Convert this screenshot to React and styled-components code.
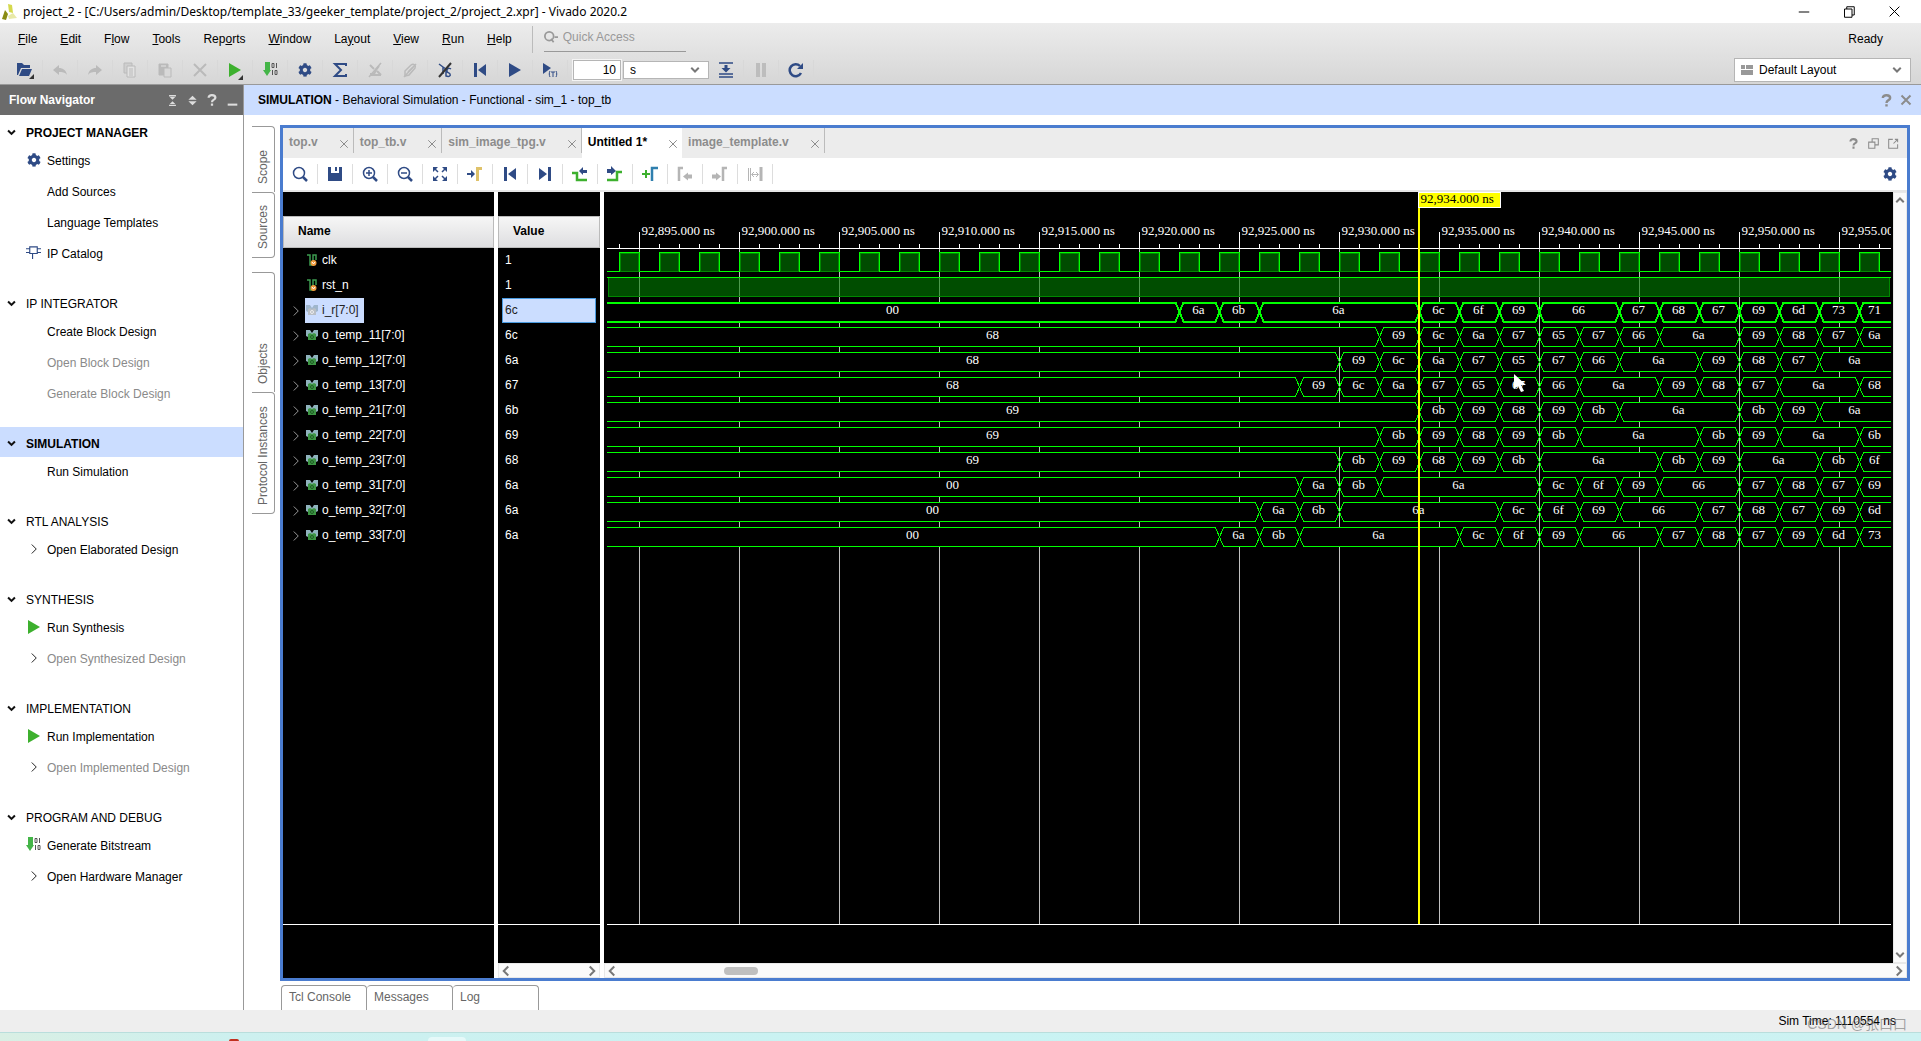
import React from 'react';
import styled, {createGlobalStyle} from 'styled-components';
import {FaCog} from 'react-icons/fa';

const NAVY = '#2f4b85';
const GREEN = '#3db02e';
const WAVE = '#00ff00';
const SELECT_BLUE = '#cbddff';

const GlobalStyle = createGlobalStyle`
  * {
    box-sizing: border-box;
  }
  body {
    margin: 0;
    background: white;
    color: black;
    font-family: 'Liberation Sans', Arial, sans-serif;
    font-size: 12px;
    line-height: 16px;
  }
  button, input, select {
    font: inherit;
    color: inherit;
    margin: 0;
    padding: 0;
    border: 0;
    background: none;
  }
  svg {
    display: block;
    flex-shrink: 0;
  }
`;

/* ---------- layout ---------- */

const Page = styled.div`
  display: flex;
  flex-direction: column;
  min-height: 100vh;
`;

const TitleBar = styled.header`
  display: flex;
  align-items: center;
  height: 23px;
  padding: 0 19px 0 1px;
  gap: 6px;
  font-family: 'Noto Sans', 'Open Sans', sans-serif;
  & h1 {
    flex: 1;
    margin: 0;
    font-size: 12px;
    font-weight: normal;
  }
`;

const WindowButtons = styled.div`
  display: flex;
  gap: 29px;
`;

const TopBar = styled.div`
  background: linear-gradient(#ececec, #d6d6d6);
  border-bottom: 1px solid #999;
`;

const MenuBar = styled.nav`
  display: flex;
  align-items: center;
  gap: 23px;
  height: 31px;
  padding: 0 38px 0 18px;
`;

const Ready = styled.span`
  margin-left: auto;
`;

const QuickAccess = styled.label`
  display: flex;
  align-items: center;
  align-self: flex-start;
  width: 154px;
  height: 27px;
  margin: 3px 0 0 -3px;
  padding-left: 11px;
  border-left: 1px solid #bbb;
  color: #8f8f8f;
  & input {
    width: 120px;
    height: 20px;
    &::placeholder {
      color: #999;
      opacity: 1;
    }
  }
  & span {
    display: flex;
    align-items: center;
    width: 142px;
    height: 24px;
    padding-bottom: 4px;
    gap: 5px;
    border-bottom: 1px solid #999;
  }
`;

const ToolBar = styled.div`
  display: flex;
  align-items: center;
  height: 30px;
  padding: 1px 10px 0 8px;
`;

const ToolButton = styled.button`
  display: flex;
  align-items: center;
  justify-content: center;
  width: 35px;
  height: 20px;
  border-right: 1px solid ${({$divider}) => $divider || '#d8d8d8'};
`;

const PlainButton = styled.button`
  display: flex;
  align-items: center;
  justify-content: center;
  width: ${({$size}) => $size || 12}px;
  height: ${({$size}) => $size || 12}px;
  color: #8c8c8c;
`;

const TimeInput = styled.input`
  width: 48px;
  height: 20px;
  margin: 0 2px 0 5px;
  padding-right: 4px;
  border: 1px solid #b5b5b5;
  outline: 1px solid #f4f4f4;
  background: white;
  text-align: right;
`;

const SelectBox = styled.div`
  display: flex;
  align-items: center;
  width: ${({$width}) => $width}px;
  height: ${({$tall}) => ($tall ? 24 : 18)}px;
  padding: 0 7px 0 6px;
  gap: 6px;
  border: 1px solid #b5b5b5;
  background: white;
  & select {
    flex: 1;
    min-width: 0;
    appearance: none;
  }
`;

const Spacer = styled.div`
  flex: 1;
`;

const Body = styled.div`
  display: flex;
  flex: 1;
`;

const SideBar = styled.aside`
  display: flex;
  flex-direction: column;
  width: 244px;
  border-right: 1px solid #999;
`;

const SideHeader = styled.div`
  display: flex;
  align-items: center;
  height: 30px;
  padding: 0 5px 0 9px;
  gap: 8px;
  margin-bottom: 1px;
  background: #6b6b6b;
  color: white;
  & h2 {
    flex: 1;
    margin: 0;
    font-size: 12px;
  }
`;

const NavSection = styled.section`
  padding-bottom: 17px;
`;

const NavHeading = styled.button`
  display: flex;
  align-items: center;
  width: 100%;
  height: 30px;
  padding: 3px 0 0 6px;
  gap: 9px;
  text-align: left;
  font-weight: ${({$bold}) => ($bold ? 'bold' : 'normal')};
  background: ${({$selected}) => ($selected ? SELECT_BLUE : 'none')};
`;

const NavItem = styled.button`
  display: flex;
  align-items: center;
  width: 100%;
  height: 31px;
  padding: 0 0 2px 26px;
  gap: 6px;
  text-align: left;
  color: ${({disabled}) => (disabled ? '#8a8a8a' : 'black')};
`;

const IconSlot = styled.span`
  display: flex;
  align-items: center;
  justify-content: center;
  width: 15px;
  height: 20px;
  padding-bottom: 2px;
`;

const Main = styled.main`
  display: flex;
  flex: 1;
  flex-direction: column;
  min-width: 0;
`;

const MainHeader = styled.div`
  display: flex;
  align-items: center;
  height: 30px;
  padding: 0 9px 0 14px;
  gap: 8px;
  background: ${SELECT_BLUE};
  & h2 {
    flex: 1;
    margin: 0;
    font-size: 12px;
    font-weight: normal;
  }
`;

const Workspace = styled.div`
  display: flex;
  flex: 1;
  padding: 10px 11px 0 8px;
  gap: 5px;
`;

const VerticalTabs = styled.div`
  display: flex;
  flex-direction: column;
  width: 23px;
  padding-top: 1px;
`;

/* rotated by half a turn, so the borders are given upside down */
const VerticalTab = styled.button`
  display: flex;
  align-items: center;
  height: ${({$height}) => $height}px;
  margin-top: ${({$gap}) => $gap || 0}px;
  padding-top: 8px;
  border: solid #999;
  border-width: ${({$last}) => ($last ? 1 : 0)}px 0 1px 1px;
  border-radius: ${({$last}) => ($last ? 4 : 0)}px 0 0 4px;
  writing-mode: vertical-rl;
  transform: rotate(180deg);
  color: #666;
`;

const Panel = styled.section`
  display: flex;
  flex: 1;
  flex-direction: column;
  min-width: 0;
  border: 3px solid #4a7ccf;
`;

const FileTabs = styled.div`
  display: flex;
  height: 30px;
  padding-right: 8px;
  background: #ececec;
`;

const FileTab = styled.div`
  display: flex;
  align-items: flex-start;
  height: ${({$active}) => ($active ? 30 : 25)}px;
  padding: 6px 3px 0 6px;
  gap: 20px;
  border-right: ${({$active}) => ($active ? 0 : 1)}px solid #bbb;
  background: ${({$active}) => ($active ? 'white' : 'none')};
  color: ${({$active}) => ($active ? 'black' : '#8c8c8c')};
  & > button:first-child {
    font-weight: bold;
  }
  & > button:last-child {
    margin-top: 4px;
  }
`;

const TabActions = styled.div`
  display: flex;
  align-items: center;
  gap: 8px;
  margin-left: auto;
`;

const WaveTools = styled.div`
  display: flex;
  align-items: center;
  height: 34px;
  padding-right: 9px;
  border-bottom: 2px solid #e6e6e6;
`;

const Viewer = styled.div`
  display: flex;
  flex: 1;
  gap: 4px;
`;

const Column = styled.div`
  display: flex;
  flex-direction: column;
  width: ${({$width}) => $width}px;
`;

const ColumnBody = styled.div`
  flex: 1;
  padding-top: 24px;
  background: black;
`;

const ColumnFoot = styled.div`
  height: ${({$height}) => $height}px;
  border-top: 1px solid white;
  background: black;
`;

const SignalTable = styled.table`
  width: 100%;
  border-collapse: separate;
  border-spacing: 0;
  color: white;
  & th {
    height: 32px;
    padding: 0 14px 2px;
    border: 1px solid #bbb;
    background: linear-gradient(#f6f6f6, #dedee0);
    color: black;
    text-align: left;
  }
  & td {
    height: 25px;
    padding: 0;
  }
`;

const NameCell = styled.div`
  display: flex;
  align-items: center;
  height: 25px;
  padding-left: 7px;
  gap: 3px;
`;

const NameLabel = styled.span`
  display: flex;
  align-items: center;
  height: 25px;
  padding: 0 5px 1px 1px;
  gap: 4px;
  background: ${({$selected}) => ($selected ? SELECT_BLUE : 'none')};
  color: ${({$selected}) => ($selected ? '#222' : 'white')};
`;

const ArrowSlot = styled.span`
  width: 12px;
`;

const ValueCell = styled.div`
  display: flex;
  align-items: center;
  height: 25px;
  margin: 0 4px;
  padding: 0 0 1px 2px;
  border: 1px solid ${({$selected}) => ($selected ? '#4a9be0' : 'black')};
  background: ${({$selected}) => ($selected ? SELECT_BLUE : 'black')};
  color: ${({$selected}) => ($selected ? '#222' : 'white')};
`;

const WaveColumn = styled.div`
  display: grid;
  flex: 1;
  grid-template-columns: 1fr 14px;
  grid-template-rows: 1fr 15px;
  min-width: 0;
`;

const WaveArea = styled.div`
  display: flex;
  flex-direction: column;
  min-width: 0;
  padding: 0 2px 0 3px;
  background: black;
`;

const WaveCanvas = styled.div`
  flex: 1;
  min-height: 400px;
  & svg {
    width: 100%;
    height: 100%;
  }
  & text {
    font-family: 'Liberation Serif', 'Times New Roman', serif;
    font-size: 13px;
    fill: white;
  }
`;

const CursorText = styled.text`
  && {
    fill: black;
  }
`;

const ScrollBar = styled.div`
  display: flex;
  align-items: center;
  justify-content: space-between;
  flex-direction: ${({$vertical}) => ($vertical ? 'column' : 'row')};
  padding: ${({$vertical}) => ($vertical ? '1px 0' : '1px 1px 0')};
  height: ${({$vertical}) => ($vertical ? 'auto' : '15px')};
  grid-column: ${({$vertical}) => ($vertical ? 'auto' : '1 / -1')};
  background: #fafafa;
  border: 1px solid #e8e8e8;
`;

const Thumb = styled.div`
  width: 34px;
  height: 8px;
  margin: 0 auto 0 106px;
  border-radius: 4px;
  background: #bfbfbf;
`;

const BottomTabs = styled.div`
  display: flex;
  height: 29px;
  padding: 4px 0 0 37px;
`;

const BottomTab = styled.button`
  width: 86px;
  height: 25px;
  padding: 0 0 2px 7px;
  border: solid #999;
  border-width: 1px 1px 0 ${({$first}) => ($first ? 1 : 0)}px;
  border-radius: 4px 4px 0 0;
  text-align: left;
  color: #666;
`;

const StatusBar = styled.footer`
  display: flex;
  align-items: center;
  justify-content: flex-end;
  position: relative;
  height: 22px;
  padding-right: 25px;
  background: #eee;
`;

const Watermark = styled.span`
  position: absolute;
  right: 14px;
  bottom: -2px;
  color: rgba(110, 110, 110, 0.6);
  font-family: 'Liberation Sans', 'Noto Sans CJK SC', sans-serif;
  font-size: 14px;
  line-height: 20px;
`;

const TaskBar = styled.div`
  display: flex;
  align-items: flex-end;
  height: 9px;
  border-top: 1px solid #b9dedc;
  background: linear-gradient(90deg, #d9efe4, #cdf0ef 12%, #c9f3f3 50%, #cdf2f2);
`;

const TaskIcon = styled.span`
  width: 10px;
  height: 2px;
  margin-left: 229px;
  border-radius: 5px 5px 0 0;
  background: #c23020;
`;

const TaskActive = styled.span`
  width: 38px;
  height: 4px;
  margin-left: 189px;
  border-radius: 4px 4px 0 0;
  background: #e6f9f9;
`;

/* ---------- icons ---------- */

const Icon = ({size = 16, color = NAVY, fill = 'none', width = 2, children}) => (
  <svg width={size} height={size} viewBox="0 0 16 16" fill={fill} stroke={color} strokeWidth={width} aria-hidden="true">
    {children}
  </svg>
);

const Chevron = ({dir = 'down', size = 12, color = '#777', width = 2}) => {
  const paths = {down: 'M3 5l5 5 5-5', up: 'M3 11l5-5 5 5', right: 'M5 2l6 6-6 6', left: 'M11 2L5 8l6 6'};
  return (
    <Icon size={size} color={color} width={(width * 16) / size}>
      <path d={paths[dir]} />
    </Icon>
  );
};

const Logo = () => (
  <svg width="16" height="18" viewBox="0 0 16 18" aria-hidden="true">
    <path d="M7 1l4 1 1 8-4-1z" fill="#d5d94e" />
    <path d="M4 7l3 4-2 6-4-1z" fill="#8a8c12" />
    <path d="M7 13l5-3 4 5-8 1z" fill="#e8e9a8" />
  </svg>
);

const Folder = () => (
  <svg width="19" height="20" viewBox="0 0 19 20" aria-hidden="true">
    <path d="M1 3h5l2 2h6v3H5l-3 7H1z" fill={NAVY} />
    <path d="M6 9h10l-3 7H3z" fill={NAVY} />
    <path d="M18 14v5h-5z" fill="#333" />
  </svg>
);

const Undo = ({flip}) => (
  <Icon fill="#bababa" color="none">
    <path d={flip ? 'M15 8L9 3v3C5 6 2 8 1 13c2-3 5-3 8-3v3z' : 'M1 8l6-5v3c4 0 7 2 8 7-2-3-5-3-8-3v3z'} />
  </Icon>
);

const Copy = () => (
  <Icon color="#bababa" width={1}>
    <path d="M2 1h8v10H2z" fill="#cfcfcf" />
    <path d="M5 4h8v11H5z" fill="#e2e2e2" />
    <path d="M7 7h4M7 9h4M7 11h4M7 13h4" />
  </Icon>
);

const Paste = () => (
  <Icon color="#bababa" width={1}>
    <path d="M2 2h9v11H2z" fill="#bababa" />
    <path d="M4 4h5" stroke="#e4e4e4" />
    <path d="M7 6h7v9H7z" fill="#d8d8d8" />
  </Icon>
);

const Cross = ({size = 16, color = '#bababa', width = 2}) => (
  <Icon size={size} color={color} width={(width * 16) / size}>
    <path d="M2 2l12 12M14 2L2 14" />
  </Icon>
);

const Play = ({color = GREEN, menu}) => (
  <svg width="16" height="20" viewBox="0 0 16 20" aria-hidden="true">
    <path d="M2 3l12 7-12 7z" fill={color} />
    {menu && <path d="M16 15v5h-5z" fill="#333" />}
  </svg>
);

const Bitstream = () => (
  <svg width="15" height="15" viewBox="0 0 15 15" aria-hidden="true">
    <path d="M2 0h5v8h1l-4 6-4-6h2z" fill="#44b548" />
    <path d="M9 1.5h2v4H9zM13.500 1v5M9.500 8v5M12 8.500h2v4h-2z" fill="none" stroke="#555" />
  </svg>
);

const Sigma = () => (
  <Icon width={2}>
    <path d="M14 4V2H3l6 6-6 6h11v-2" />
  </Icon>
);

const BreakpointOff = () => (
  <Icon color="#bababa" width={2}>
    <path d="M3 3l4 4M3 12h4l2-4 3-4M3 13h11M10 9l4 4" />
    <path d="M2 15L14 1" strokeWidth="1.500" />
  </Icon>
);

const Marker = () => (
  <Icon color="#bababa" width={1.500}>
    <path d="M3 9l6-6c3-2 5 1 4 3l-6 7-4 1zM6 10l5-5" />
    <path d="M2 15L14 2" />
  </Icon>
);

const ProbesOff = () => (
  <Icon width={1.500}>
    <path d="M2 2l4 3v7M6 5l3 2M9 7v7c3 1 5 0 4-2s-4-1-3-4 4-1 4-1" />
    <path d="M2 15L14 1" stroke="#333" strokeWidth="2" />
  </Icon>
);

const SkipIcon = ({end}) => (
  <Icon fill={NAVY} color="none">
    {end ? <path d="M2 2l8 6-8 6zM11 1h3v14h-3z" /> : <path d="M14 2L6 8l8 6zM2 1h3v14H2z" />}
  </Icon>
);

const PlayTimed = () => (
  <Icon fill={NAVY} color="none">
    <path d="M1 1l8 5-8 6z" />
    <path d="M8 9c-1 2-1 4 0 6M14 9c1 2 1 4 0 6M9 10h4M11 10v5" fill="none" stroke={NAVY} strokeWidth="1" />
  </Icon>
);

const StepDown = () => (
  <Icon width={1.500}>
    <path d="M1 1h14M1 12h14M1 15h14" />
    <path d="M6.500 3h3v3h3L8 10.500 3.500 6h3z" fill={NAVY} stroke="none" />
  </Icon>
);

const Pause = () => (
  <Icon fill="#bdbdbd" color="none">
    <path d="M3 1h4v14H3zM9 1h4v14H9z" />
  </Icon>
);

const Restart = () => (
  <Icon width={2.500}>
    <path d="M13 11a6 6 0 1 1-1-7" />
    <path d="M15 1v6H9z" fill={NAVY} stroke="none" />
  </Icon>
);

const LayoutIcon = () => (
  <svg width="12" height="12" viewBox="0 0 12 12" fill="#999" aria-hidden="true">
    <path d="M0 1h4v4H0zM5 1h7v4H5zM0 6h12v5H0z" />
  </svg>
);

const Question = ({size = 13, color = '#8c8c8c'}) => (
  <Icon size={size} color={color} width={3}>
    <path d="M3.500 5c0-5 9-4 9 0 0 3-4.500 2-4.500 6M8 12.500v3" />
  </Icon>
);

const Lens = ({sign}) => (
  <Icon width={1.500}>
    <circle cx="7" cy="7" r="5.500" />
    <path d="M11 11l4 4" strokeWidth="2.500" />
    {sign && <path d={sign === '+' ? 'M4 7h6M7 4v6' : 'M4 7h6'} />}
  </Icon>
);

const Save = () => (
  <Icon fill={NAVY} color="none">
    <path d="M1 1h3v6h8V1h3v14H1zM8 1h2v4H8z" />
  </Icon>
);

const Fit = () => (
  <Icon width={1.500} fill={NAVY}>
    <path d="M2 2l4 4M14 2l-4 4M14 14l-4-4M2 14l4-4" />
    <path d="M1 1h5L1 6zM15 1v5l-5-5zM15 15h-5l5-5zM1 15v-5l5 5z" stroke="none" />
  </Icon>
);

const EdgeIcon = ({kind}) => {
  if (kind === 'cursor') {
    return (
      <Icon width={3} color="#dfc26a">
        <path d="M0 7h4V4l4 4-4 4V9H0z" fill={NAVY} stroke="none" />
        <path d="M10.500 15V2.500H15" />
      </Icon>
    );
  }
  if (kind === 'prev' || kind === 'next') {
    return (
      <Icon width={2.500} color={GREEN}>
        <path d={kind === 'prev' ? 'M0 7h5v7h10' : 'M0 14h10V6h5'} />
        <path d={kind === 'prev' ? 'M15 4h-4V1L7 5l4 4V7h4z' : 'M0 3h4V0l5 5-5 4V7H0z'} fill={NAVY} stroke="none" />
      </Icon>
    );
  }
  if (kind === 'add') {
    return (
      <Icon width={2} color={GREEN}>
        <path d="M0 8h8M4 4v8" />
        <path d="M10 15V2h6" stroke="#2f7fae" strokeWidth="2.500" />
      </Icon>
    );
  }
  if (kind === 'span') {
    return (
      <Icon width={1} color="#b5b5b5">
        <path d="M1.500 2v13M3.500 2v13M5 8.500h6M7 6L4.500 8.500 7 11M9 6l2.500 2.500L9 11" />
        <path d="M14 1v14" strokeWidth="3" />
      </Icon>
    );
  }
  return (
    <Icon width={2.500} color="#b5b5b5">
      <path d={kind === 'markPrev' ? 'M2 15V2h4' : 'M11 15V2h4'} />
      <path
        d={kind === 'markPrev' ? 'M15 8.500h-4v-2L6 10.500l5 4v-2h4z' : 'M0 8.500h4v-2l5 4-5 4v-2H0z'}
        fill="#b5b5b5"
        stroke="none"
      />
    </Icon>
  );
};

const Chip = () => (
  <Icon size={15} width={1.200}>
    <path d="M4 2h8v7H4zM0 4h4M0 8h4M12 4h4M12 8h4M7 9v6" />
  </Icon>
);

const SignalIcon = ({kind}) => {
  if (kind === 'bit') {
    return (
      <svg width="12" height="12" viewBox="0 0 12 12" aria-hidden="true">
        <path d="M1 1h3v10h3V1h3v5" fill="none" stroke="#3d9c50" strokeWidth="1.500" />
        <circle cx="7.500" cy="9" r="3" fill="#f09a3c" />
        <path d="M6 8l1.500 2L9 8" fill="none" stroke="#fff" />
      </svg>
    );
  }
  const selected = kind === 'selected';
  return (
    <svg width="12" height="12" viewBox="0 0 12 12" aria-hidden="true">
      <path d="M0 1h4l2 3 2-3h4v6l-2 1H2L0 7z" fill={selected ? '#9fb6cc' : '#8fb3bd'} />
      <path d="M2 5l2-1 2 1 2-1 2 1v6H2z" fill={selected ? '#b9bfc6' : '#3d9644'} />
      <circle cx="6" cy="8" r="1.500" fill="none" stroke={selected ? '#eee' : '#1f5c26'} />
    </svg>
  );
};

const Gear = ({size = 14}) => <FaCog size={size} color={NAVY} aria-hidden="true" />;

/* ---------- data ---------- */

// [label, index of the mnemonic letter]
const menus = [
  ['File', 0],
  ['Edit', 0],
  ['Flow', 1],
  ['Tools', 0],
  ['Reports', 3],
  ['Window', 0],
  ['Layout', 2],
  ['View', 0],
  ['Run', 0],
  ['Help', 0],
];

const mainTools = [
  ['Open', <Folder />],
  ['Undo', <Undo />],
  ['Redo', <Undo flip />],
  ['Copy', <Copy />],
  ['Paste', <Paste />],
  ['Delete', <Cross />],
  ['Run', <Play menu />],
  ['Generate Bitstream', <Bitstream />],
  ['Settings', <Gear />],
  ['Report', <Sigma />],
  ['Toggle breakpoint', <BreakpointOff />],
  ['Edit marks', <Marker />],
  ['Clear probes', <ProbesOff />],
  ['Restart simulation', <SkipIcon />],
  ['Run all', <Play color={NAVY} />],
  ['Run for time', <PlayTimed />],
];

const waveTools = [
  ['Find', <Lens />],
  ['Save', <Save />],
  ['Zoom in', <Lens sign="+" />],
  ['Zoom out', <Lens sign="-" />],
  ['Zoom fit', <Fit />],
  ['Go to cursor', <EdgeIcon kind="cursor" />],
  ['Go to start', <SkipIcon />],
  ['Go to end', <SkipIcon end />],
  ['Previous transition', <EdgeIcon kind="prev" />],
  ['Next transition', <EdgeIcon kind="next" />],
  ['Add marker', <EdgeIcon kind="add" />],
  ['Previous marker', <EdgeIcon kind="markPrev" />],
  ['Next marker', <EdgeIcon kind="markNext" />],
  ['Swap cursors', <EdgeIcon kind="span" />],
];

const arrow = <Chevron dir="right" color="#222" width={1} />;

const sections = [
  {
    title: 'PROJECT MANAGER',
    bold: true,
    items: [
      {label: 'Settings', icon: <Gear />},
      {label: 'Add Sources'},
      {label: 'Language Templates'},
      {label: 'IP Catalog', icon: <Chip />},
    ],
  },
  {
    title: 'IP INTEGRATOR',
    items: [
      {label: 'Create Block Design'},
      {label: 'Open Block Design', disabled: true},
      {label: 'Generate Block Design', disabled: true},
    ],
  },
  {title: 'SIMULATION', bold: true, selected: true, items: [{label: 'Run Simulation'}]},
  {title: 'RTL ANALYSIS', items: [{label: 'Open Elaborated Design', icon: arrow}]},
  {
    title: 'SYNTHESIS',
    items: [
      {label: 'Run Synthesis', icon: <Play />},
      {label: 'Open Synthesized Design', icon: arrow, disabled: true},
    ],
  },
  {
    title: 'IMPLEMENTATION',
    items: [
      {label: 'Run Implementation', icon: <Play />},
      {label: 'Open Implemented Design', icon: arrow, disabled: true},
    ],
  },
  {
    title: 'PROGRAM AND DEBUG',
    items: [
      {label: 'Generate Bitstream', icon: <Bitstream />},
      {label: 'Open Hardware Manager', icon: arrow},
    ],
  },
];

const files = ['top.v', 'top_tb.v', 'sim_image_tpg.v', 'Untitled 1*', 'image_template.v'];

// bus values as "value@end", times in ns after 92,900
const signals = [
  {name: 'clk', value: '1', kind: 'bit'},
  {name: 'rst_n', value: '1', kind: 'bit'},
  {
    name: 'i_r[7:0]',
    value: '6c',
    kind: 'selected',
    bus: '00@22 6a@24 6b@26 6a@34 6c@36 6f@38 69@40 66@44 67@46 68@48 67@50 69@52 6d@54 73@56 71',
  },
  {
    name: 'o_temp_11[7:0]',
    value: '6c',
    bus: '68@32 69@34 6c@36 6a@38 67@40 65@42 67@44 66@46 6a@50 69@52 68@54 67@56 6a',
  },
  {
    name: 'o_temp_12[7:0]',
    value: '6a',
    bus: '68@30 69@32 6c@34 6a@36 67@38 65@40 67@42 66@44 6a@48 69@50 68@52 67@54 6a',
  },
  {
    name: 'o_temp_13[7:0]',
    value: '67',
    bus: '68@28 69@30 6c@32 6a@34 67@36 65@38 67@40 66@42 6a@46 69@48 68@50 67@52 6a@56 68',
  },
  {name: 'o_temp_21[7:0]', value: '6b', bus: '69@34 6b@36 69@38 68@40 69@42 6b@44 6a@50 6b@52 69@54 6a'},
  {name: 'o_temp_22[7:0]', value: '69', bus: '69@32 6b@34 69@36 68@38 69@40 6b@42 6a@48 6b@50 69@52 6a@56 6b'},
  {name: 'o_temp_23[7:0]', value: '68', bus: '69@30 6b@32 69@34 68@36 69@38 6b@40 6a@46 6b@48 69@50 6a@54 6b@56 6f'},
  {name: 'o_temp_31[7:0]', value: '6a', bus: '00@28 6a@30 6b@32 6a@40 6c@42 6f@44 69@46 66@50 67@52 68@54 67@56 69'},
  {
    name: 'o_temp_32[7:0]',
    value: '6a',
    bus: '00@26 6a@28 6b@30 6a@38 6c@40 6f@42 69@44 66@48 67@50 68@52 67@54 69@56 6d',
  },
  {
    name: 'o_temp_33[7:0]',
    value: '6a',
    bus: '00@24 6a@26 6b@28 6a@36 6c@38 6f@40 69@42 66@46 67@48 68@50 67@52 69@54 6d@56 73',
  },
];

/* ---------- waveform ---------- */

const NS = 20;
const FIRST = -6.6;
const LAST = 57.6;
const AXIS_Y = 56;
const timeX = (t) => Math.round((t + 5) * NS + 32) + 0.5;
const rowTop = (row) => AXIS_Y + 4 + row * 25 + 0.5;

const BusWave = ({row, bus, thick}) => {
  const top = rowTop(row);
  const mid = top + 9.5;
  const bottom = top + 19;
  let start = FIRST;
  return bus.split(' ').map((part) => {
    const [label, endText] = part.split('@');
    const end = endText ? Number(endText) : LAST;
    const open = start === FIRST;
    const x0 = open ? -20 : timeX(start);
    const x1 = endText ? timeX(end) : timeX(80);
    const labelX = (timeX(start) + timeX(end)) / 2 - 1;
    const points = `${x0},${mid} ${x0 + 4},${top} ${x1 - 4},${top} ${x1},${mid} ${x1 - 4},${bottom} ${x0 + 4},${bottom}`;
    start = end;
    return (
      <g key={x0}>
        <polygon points={points} fill="black" stroke={WAVE} strokeWidth={thick ? 2 : 1} />
        <text x={labelX} y={top + 11} textAnchor="middle">
          {label}
        </text>
      </g>
    );
  });
};

const ClockWave = ({row}) => {
  const top = rowTop(row);
  const bottom = top + 19;
  const pulses = [];
  for (let t = -6; t < LAST; t += 2) {
    pulses.push(t);
  }
  const line = pulses.map((t) => `H${timeX(t)}V${top}H${timeX(t + 1)}V${bottom}`).join('');
  return (
    <g>
      {pulses.map((t) => (
        <rect key={t} x={timeX(t) + 1} y={top + 1} width={NS - 2} height="18" fill="#004c00" stroke="#008800" />
      ))}
      <path d={`M0 ${bottom}${line}H3000`} fill="none" stroke={WAVE} />
    </g>
  );
};

const Waveform = () => {
  const ticks = [];
  for (let t = -6; t <= 57; t += 1) {
    ticks.push(t);
  }
  const majors = ticks.filter((t) => t % 5 === 0);
  const cursorX = timeX(34) - 1;
  return (
    <svg role="img" aria-label="Waveforms">
      <g shapeRendering="crispEdges">
        {majors.map((t) => (
          <line key={t} x1={timeX(t)} x2={timeX(t)} y1={AXIS_Y} y2="100%" stroke="#c0c0c0" />
        ))}
        {ticks.map((t) => (
          <line key={t} x1={timeX(t)} x2={timeX(t)} y1={t % 5 === 0 ? 40 : 52} y2={AXIS_Y} stroke="white" />
        ))}
        <line x1="0" x2="100%" y1={AXIS_Y + 0.5} y2={AXIS_Y + 0.5} stroke="white" />
        <ClockWave row={0} />
        <rect x="1" y={rowTop(1)} width="99.8%" height="19" fill="#008000" fillOpacity="0.6" stroke="#008800" />
        <line x1="0" x2="100%" y1={rowTop(1)} y2={rowTop(1)} stroke={WAVE} />
        {signals.map(
          (signal, row) =>
            signal.bus && (
              <BusWave key={signal.name} row={row} bus={signal.bus} thick={signal.kind === 'selected'} />
            ),
        )}
        <line x1={cursorX + 0.5} x2={cursorX + 0.5} y1="0" y2="100%" stroke="#ffff00" strokeWidth="2" />
        <rect x={cursorX} y="0" width="82" height="15" fill="#ffff00" stroke="white" />
      </g>
      {majors.map((t) => (
        <text key={t} x={timeX(t) + 2} y="43">
          {`92,${900 + t}.000 ns`}
        </text>
      ))}
      <CursorText x={cursorX + 2} y="11">
        92,934.000 ns
      </CursorText>
      <path d="M907 182v15l4-3 3 6 3-1-3-6h5z" fill="white" />
    </svg>
  );
};

/* ---------- page parts ---------- */

const MenuItem = ({label, index}) => (
  <button type="button">
    {label.slice(0, index)}
    <u>{label[index]}</u>
    {label.slice(index + 1)}
  </button>
);

const Header = () => (
  <>
    <TitleBar>
      <Logo />
      <h1>project_2 - [C:/Users/admin/Desktop/template_33/geeker_template/project_2/project_2.xpr] - Vivado 2020.2</h1>
      <WindowButtons>
        <PlainButton type="button" aria-label="Minimize" $size={16}>
          <Icon color="black" size={12} width={1.300}>
            <path d="M1 8h14" />
          </Icon>
        </PlainButton>
        <PlainButton type="button" aria-label="Restore" $size={16}>
          <Icon color="black" size={12} width={1.300}>
            <path d="M2 4h10v11H2zM5 4V1h10v11h-3" />
          </Icon>
        </PlainButton>
        <PlainButton type="button" aria-label="Close window" $size={16}>
          <Cross color="black" size={13} width={1} />
        </PlainButton>
      </WindowButtons>
    </TitleBar>
    <TopBar>
      <MenuBar>
        {menus.map(([label, index]) => (
          <MenuItem key={label} label={label} index={index} />
        ))}
        <QuickAccess>
          <span>
            <Icon size={14} color="#999" width={2}>
              <circle cx="6" cy="7" r="5" />
              <path d="M8 10l3 4M12 8h4" />
            </Icon>
            <input placeholder="Quick Access" aria-label="Quick Access" />
          </span>
        </QuickAccess>
        <Ready>Ready</Ready>
      </MenuBar>
      <ToolBar>
        {mainTools.map(([label, icon]) => (
          <ToolButton key={label} type="button" aria-label={label}>
            {icon}
          </ToolButton>
        ))}
        <TimeInput defaultValue="10" aria-label="Run time" />
        <SelectBox $width={86}>
          <select aria-label="Time unit">
            <option>s</option>
          </select>
          <Chevron />
        </SelectBox>
        <ToolButton type="button" aria-label="Step">
          <StepDown />
        </ToolButton>
        <ToolButton type="button" aria-label="Break">
          <Pause />
        </ToolButton>
        <ToolButton type="button" aria-label="Relaunch">
          <Restart />
        </ToolButton>
        <Spacer />
        <SelectBox $width={177} $tall>
          <LayoutIcon />
          <select aria-label="Layout">
            <option>Default Layout</option>
          </select>
          <Chevron />
        </SelectBox>
      </ToolBar>
    </TopBar>
  </>
);

const FlowNavigator = () => (
  <SideBar>
    <SideHeader>
      <h2>Flow Navigator</h2>
      <PlainButton type="button" aria-label="Collapse all">
        <Icon size={11} color="#ddd">
          <path d="M3 1h10M3 15h10" />
          <path d="M4 3h8L8 7zM4 13h8L8 9z" fill="#ddd" stroke="none" />
        </Icon>
      </PlainButton>
      <PlainButton type="button" aria-label="Expand all">
        <Icon size={11} color="none" fill="#ddd">
          <path d="M2 7h12L8 1zM2 9h12l-6 6z" />
        </Icon>
      </PlainButton>
      <PlainButton type="button" aria-label="Help on flow">
        <Question size={12} color="#ddd" />
      </PlainButton>
      <PlainButton type="button" aria-label="Hide">
        <Icon size={11} color="#ddd" width={3}>
          <path d="M1 14h14" />
        </Icon>
      </PlainButton>
    </SideHeader>
    {sections.map((section) => (
      <NavSection key={section.title}>
        <NavHeading type="button" $bold={section.bold} $selected={section.selected}>
          <Chevron size={11} color="#111" />
          {section.title}
        </NavHeading>
        {section.items.map((item) => (
          <NavItem key={item.label} type="button" disabled={item.disabled}>
            <IconSlot>{item.icon}</IconSlot>
            {item.label}
          </NavItem>
        ))}
      </NavSection>
    ))}
  </SideBar>
);

const NameColumn = () => (
  <Column $width={211}>
    <ColumnBody>
      <SignalTable>
        <thead>
          <tr>
            <th>Name</th>
          </tr>
        </thead>
        <tbody>
          {signals.map(({name, kind}) => (
            <tr key={name}>
              <td>
                <NameCell>
                  <ArrowSlot>{kind !== 'bit' && <Chevron dir="right" color="#999" width={1} />}</ArrowSlot>
                  <NameLabel $selected={kind === 'selected'}>
                    <SignalIcon kind={kind} />
                    {name}
                  </NameLabel>
                </NameCell>
              </td>
            </tr>
          ))}
        </tbody>
      </SignalTable>
    </ColumnBody>
    <ColumnFoot $height={54} />
  </Column>
);

const ValueColumn = () => (
  <Column $width={102}>
    <ColumnBody>
      <SignalTable>
        <thead>
          <tr>
            <th>Value</th>
          </tr>
        </thead>
        <tbody>
          {signals.map(({name, value, kind}) => (
            <tr key={name}>
              <td>
                <ValueCell $selected={kind === 'selected'}>{value}</ValueCell>
              </td>
            </tr>
          ))}
        </tbody>
      </SignalTable>
    </ColumnBody>
    <ColumnFoot $height={39} />
    <ScrollBar>
      <Chevron dir="left" />
      <Chevron dir="right" />
    </ScrollBar>
  </Column>
);

const WavePanel = () => (
  <Panel>
    <FileTabs>
      {files.map((file) => {
        const active = file === 'Untitled 1*';
        return (
          <FileTab key={file} $active={active}>
            <button type="button">{file}</button>
            <PlainButton type="button" aria-label={`Close ${file}`}>
              <Cross size={10} color="#8c8c8c" width={1} />
            </PlainButton>
          </FileTab>
        );
      })}
      <TabActions>
        <PlainButton type="button" aria-label="Help on waveform">
          <Question size={11} />
        </PlainButton>
        <PlainButton type="button" aria-label="Float">
          <Icon size={11} color="#8c8c8c" width={1.500}>
            <path d="M1 6h9v9H1zM6 6V1h9v9h-5" />
          </Icon>
        </PlainButton>
        <PlainButton type="button" aria-label="Maximize">
          <Icon size={11} color="#8c8c8c" width={1.500}>
            <path d="M7 2H1v13h13V9M8 8l6-6M10 2h4v4" />
          </Icon>
        </PlainButton>
      </TabActions>
    </FileTabs>
    <WaveTools>
      {waveTools.map(([label, icon]) => (
        <ToolButton key={label} type="button" aria-label={label} $divider="#ddd">
          {icon}
        </ToolButton>
      ))}
      <Spacer />
      <PlainButton type="button" aria-label="Waveform settings" $size={16}>
        <Gear />
      </PlainButton>
    </WaveTools>
    <Viewer>
      <NameColumn />
      <ValueColumn />
      <WaveColumn>
        <WaveArea>
          <WaveCanvas>
            <Waveform />
          </WaveCanvas>
          <ColumnFoot $height={39} />
        </WaveArea>
        <ScrollBar $vertical>
          <Chevron dir="up" />
          <Chevron />
        </ScrollBar>
        <ScrollBar>
          <Chevron dir="left" />
          <Thumb />
          <Chevron dir="right" />
        </ScrollBar>
      </WaveColumn>
    </Viewer>
  </Panel>
);

const App = () => (
  <Page>
    <GlobalStyle />
    <Header />
    <Body>
      <FlowNavigator />
      <Main>
        <MainHeader>
          <h2>
            <b>SIMULATION</b> - Behavioral Simulation - Functional - sim_1 - top_tb
          </h2>
          <PlainButton type="button" aria-label="Help on simulation">
            <Question />
          </PlainButton>
          <PlainButton type="button" aria-label="Close simulation">
            <Cross size={12} color="#8c8c8c" />
          </PlainButton>
        </MainHeader>
        <Workspace>
          <VerticalTabs>
            <VerticalTab type="button" $height={66}>
              Scope
            </VerticalTab>
            <VerticalTab type="button" $height={66} $last>
              Sources
            </VerticalTab>
            <VerticalTab type="button" $height={120} $gap={14}>
              Objects
            </VerticalTab>
            <VerticalTab type="button" $height={122} $last>
              Protocol Instances
            </VerticalTab>
          </VerticalTabs>
          <WavePanel />
        </Workspace>
        <BottomTabs>
          <BottomTab type="button" $first>
            Tcl Console
          </BottomTab>
          <BottomTab type="button">Messages</BottomTab>
          <BottomTab type="button">Log</BottomTab>
        </BottomTabs>
      </Main>
    </Body>
    <StatusBar>
      Sim Time: 1110554 ns
      <Watermark>CSDN @张口口</Watermark>
    </StatusBar>
    <TaskBar>
      <TaskIcon />
      <TaskActive />
    </TaskBar>
  </Page>
);

export default App;
